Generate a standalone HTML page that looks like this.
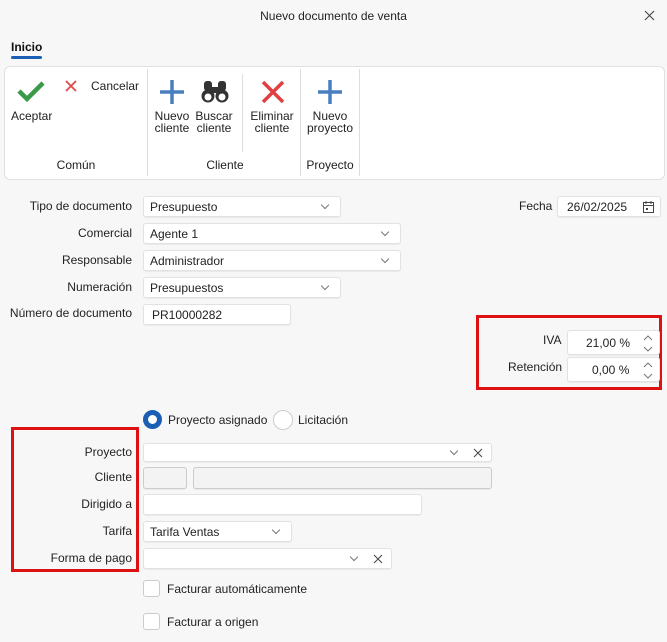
<!DOCTYPE html>
<html><head><meta charset="utf-8"><style>
*{margin:0;padding:0;box-sizing:border-box}
body{width:667px;height:642px;background:#f7f7f7;font-family:"Liberation Sans",Arial,sans-serif;font-size:12px;color:#222;position:relative;overflow:hidden}
.a{position:absolute;white-space:nowrap}
.lbl{position:absolute;right:535px;white-space:nowrap;line-height:14px}
.in{position:absolute;background:#fff;border:1px solid #e2e2e2;border-radius:3px;box-shadow:0 1px 1px rgba(0,0,0,.06);line-height:21px;padding-left:6px}
.chev{position:absolute;width:6px;height:6px;border-right:1px solid #777;border-bottom:1px solid #777;transform:rotate(45deg)}
.sep{position:absolute;width:1px;background:#ddd}
.c{position:absolute;text-align:center;line-height:12px;white-space:nowrap}
.cb{position:absolute;width:17px;height:17px;background:#fff;border:1px solid #ccc;border-radius:3px}
</style></head><body>
<div class="a" style="left:0;width:667px;text-align:center;top:9px">Nuevo documento de venta</div>
<svg class="a" style="left:644px;top:10px" width="11" height="11"><path d="M1 1L10 10M10 1L1 10" stroke="#444" stroke-width="1.1"/></svg>
<div class="a" style="left:11px;top:40px;font-weight:bold;color:#111">Inicio</div>
<div class="a" style="left:11px;top:56px;width:31px;height:3px;background:#1a5fb4;border-radius:2px"></div>
<div class="a" style="left:4px;top:66px;width:661px;height:114px;background:#fff;border:1px solid #e0e0e0;border-radius:6px"></div>
<div class="sep" style="left:147px;top:69px;height:107px"></div>
<div class="sep" style="left:242px;top:74px;height:78px"></div>
<div class="sep" style="left:300px;top:69px;height:107px"></div>
<div class="sep" style="left:359px;top:69px;height:107px"></div>
<svg class="a" style="left:16px;top:79px" width="30" height="24"><path d="M3 12L11 20L27 4" stroke="#3a9a4a" stroke-width="4.5" fill="none"/></svg>
<div class="a" style="left:11px;top:109px">Aceptar</div>
<svg class="a" style="left:65px;top:80px" width="12" height="12"><path d="M1 1L11 11M11 1L1 11" stroke="#e04848" stroke-width="1.8"/></svg>
<div class="a" style="left:91px;top:79px">Cancelar</div>
<svg class="a" style="left:160px;top:80px" width="24" height="24"><path d="M12 0V24M0 12H24" stroke="#4a7fbf" stroke-width="3.5"/></svg>
<div class="c" style="left:152px;width:40px;top:110px">Nuevo<br>cliente</div>
<svg class="a" style="left:200px;top:80px" width="30" height="24"><rect x="4" y="1" width="8" height="10" rx="3" fill="#333"/><rect x="18" y="1" width="8" height="10" rx="3" fill="#333"/><rect x="11" y="7" width="8" height="6" fill="#333"/><circle cx="8" cy="16" r="6.5" fill="#333"/><circle cx="22" cy="16" r="6.5" fill="#333"/><circle cx="8" cy="17" r="3.5" fill="#fff"/><circle cx="22" cy="17" r="3.5" fill="#fff"/></svg>
<div class="c" style="left:194px;width:40px;top:110px">Buscar<br>cliente</div>
<svg class="a" style="left:261px;top:80px" width="24" height="24"><path d="M2 2L22 22M22 2L2 22" stroke="#e04040" stroke-width="3.5"/></svg>
<div class="c" style="left:247px;width:50px;top:110px">Eliminar<br>cliente</div>
<svg class="a" style="left:318px;top:80px" width="24" height="24"><path d="M12 0V24M0 12H24" stroke="#4a7fbf" stroke-width="3.5"/></svg>
<div class="c" style="left:303px;width:54px;top:110px">Nuevo<br>proyecto</div>
<div class="c" style="left:40px;width:72px;top:159px">Común</div>
<div class="c" style="left:190px;width:70px;top:159px">Cliente</div>
<div class="c" style="left:300px;width:60px;top:159px">Proyecto</div>

<div class="lbl" style="top:199px">Tipo de documento</div>
<div class="in" style="left:143px;top:196px;width:198px;height:21px">Presupuesto<div class="chev" style="right:12px;top:5px"></div></div>
<div class="lbl" style="top:226px">Comercial</div>
<div class="in" style="left:143px;top:223px;width:258px;height:21px">Agente 1<div class="chev" style="right:12px;top:5px"></div></div>
<div class="lbl" style="top:253px">Responsable</div>
<div class="in" style="left:143px;top:250px;width:258px;height:21px">Administrador<div class="chev" style="right:12px;top:5px"></div></div>
<div class="lbl" style="top:280px">Numeración</div>
<div class="in" style="left:143px;top:277px;width:198px;height:21px">Presupuestos<div class="chev" style="right:12px;top:5px"></div></div>
<div class="lbl" style="top:306px">Número de documento</div>
<div class="in" style="left:143px;top:304px;width:148px;height:21px;padding-left:8px">PR10000282</div>
<div class="a" style="left:519px;top:199px">Fecha</div>
<div class="in" style="left:557px;top:196px;width:104px;height:21px;padding-left:9px">26/02/2025
<svg style="position:absolute;right:6px;top:4px" width="11" height="12"><rect x="0.5" y="1.5" width="10" height="10" fill="none" stroke="#444"/><path d="M0.5 4.5H10.5M3 0V3M8 0V3" stroke="#444"/><rect x="3" y="7" width="2" height="2" fill="#444"/></svg></div>
<div class="a" style="left:476px;top:315px;width:186px;height:75px;border:3px solid #dd1111"></div>
<div class="a" style="left:543px;top:333px">IVA</div>
<div class="in" style="left:567px;top:330px;width:93px;height:25px;line-height:25px;padding-left:18px">21,00 %</div>
<div class="a" style="left:508px;top:360px">Retención</div>
<div class="in" style="left:567px;top:357px;width:93px;height:25px;line-height:25px;padding-left:24px">0,00 %</div>
<svg class="a" style="left:642px;top:333px" width="12" height="48"><path d="M2 7L6 3L10 7M2 14L6 18L10 14M2 34L6 30L10 34M2 41L6 45L10 41" stroke="#777" fill="none"/></svg>

<div class="a" style="left:143px;top:410px;width:19px;height:19px;border-radius:50%;border:5px solid #1a5fb4;background:#fff"></div>
<div class="a" style="left:168px;top:413px">Proyecto asignado</div>
<div class="a" style="left:273px;top:410px;width:20px;height:20px;border-radius:50%;border:1px solid #ccc;background:#fff"></div>
<div class="a" style="left:298px;top:413px">Licitación</div>
<div class="a" style="left:11px;top:427px;width:128px;height:145px;border:3px solid #dd1111"></div>
<div class="lbl" style="top:445px">Proyecto</div>
<div class="in" style="left:143px;top:443px;width:349px;height:19px"><div class="chev" style="right:34px;top:4px"></div>
<svg style="position:absolute;right:8px;top:4px" width="10" height="10"><path d="M1 1L9 9M9 1L1 9" stroke="#444"/></svg></div>
<div class="lbl" style="top:470px">Cliente</div>
<div class="in" style="left:143px;top:467px;width:44px;height:22px;background:#f3f3f3;border-color:#ccc"></div>
<div class="in" style="left:193px;top:467px;width:299px;height:22px;background:#f3f3f3;border-color:#ccc"></div>
<div class="lbl" style="top:497px">Dirigido a</div>
<div class="in" style="left:143px;top:494px;width:279px;height:21px"></div>
<div class="lbl" style="top:524px">Tarifa</div>
<div class="in" style="left:143px;top:521px;width:149px;height:21px">Tarifa Ventas<div class="chev" style="right:12px;top:5px"></div></div>
<div class="lbl" style="top:551px">Forma de pago</div>
<div class="in" style="left:143px;top:548px;width:249px;height:21px"><div class="chev" style="right:34px;top:5px"></div>
<svg style="position:absolute;right:8px;top:5px" width="10" height="10"><path d="M1 1L9 9M9 1L1 9" stroke="#444"/></svg></div>
<div class="cb" style="left:143px;top:580px"></div>
<div class="a" style="left:167px;top:582px">Facturar automáticamente</div>
<div class="cb" style="left:143px;top:613px"></div>
<div class="a" style="left:167px;top:615px">Facturar a origen</div>
</body></html>
